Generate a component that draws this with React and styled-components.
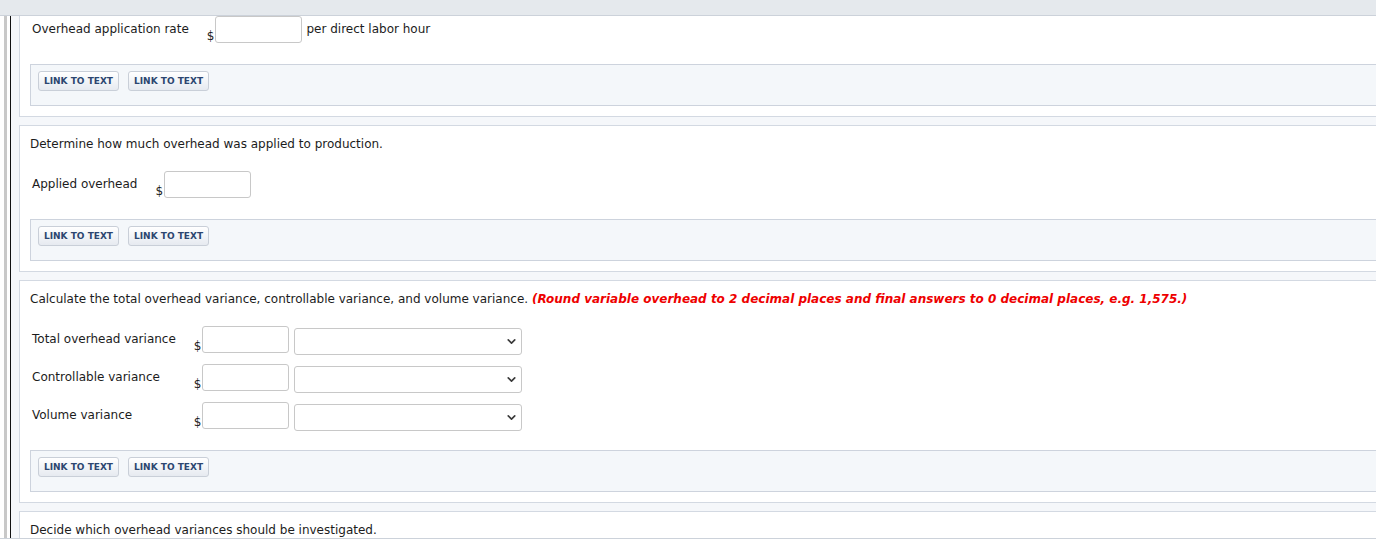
import React from "react";
import styled, { createGlobalStyle } from "styled-components";
import { ChevronDown } from "lucide-react";

const GlobalStyle = createGlobalStyle`
  html, body {
    margin: 0;
    padding: 0;
    background: #ffffff;
  }
  body {
    font-family: "DejaVu Sans", Verdana, sans-serif;
    font-size: 12px;
    color: #1c1c1c;
  }
`;

function LinkBar() {
  return (
    <LinkBox>
      <LinkButton type="button">LINK TO TEXT</LinkButton>
      <LinkButton type="button">LINK TO TEXT</LinkButton>
    </LinkBox>
  );
}

// one answer line; its cells drop into the parent grid so columns line up
function AnswerRow({ label, suffix, select }) {
  return (
    <Row>
      <Label>{label}</Label>
      <Dollar>$</Dollar>
      <AmountInput type="text" />
      {suffix && <Suffix>{suffix}</Suffix>}
      {select && (
        <SelectWrap>
          <Select defaultValue="">
            <option value=""></option>
            <option value="fav">Favorable</option>
            <option value="unfav">Unfavorable</option>
            <option value="neither">Neither favorable nor unfavorable</option>
          </Select>
          <Chevron>
            <ChevronDown size={13} strokeWidth={3} />
          </Chevron>
        </SelectWrap>
      )}
    </Row>
  );
}

export default function App() {
  return (
    <>
      <GlobalStyle />
      <TopBar />
      <Body>
        <Rail>
          <RailLine />
        </Rail>
        <Content>
          <Panel $first>
            <Rows>
              <AnswerRow
                label="Overhead application rate"
                suffix="per direct labor hour"
              />
            </Rows>
            <LinkBar />
          </Panel>

          <Panel>
            <Prompt>Determine how much overhead was applied to production.</Prompt>
            <Rows>
              <AnswerRow label="Applied overhead" />
            </Rows>
            <LinkBar />
          </Panel>

          <Panel>
            <Prompt>
              Calculate the total overhead variance, controllable variance, and
              volume variance.{" "}
              <Note>
                (Round variable overhead to 2 decimal places and final answers
                to 0 decimal places, e.g. 1,575.)
              </Note>
            </Prompt>
            <Rows>
              <AnswerRow label="Total overhead variance" select />
              <AnswerRow label="Controllable variance" select />
              <AnswerRow label="Volume variance" select />
            </Rows>
            <LinkBar />
          </Panel>

          <Panel>
            <Prompt>Decide which overhead variances should be investigated.</Prompt>
          </Panel>
        </Content>
      </Body>
    </>
  );
}

const TopBar = styled.div`
  height: 15px;
  background: #e5e9ed;
  border-bottom: 1px solid #ccd2da;
`;

const Body = styled.div`
  display: flex;
  height: 522px;
  overflow: hidden;
  border-bottom: 1px solid #ccd2da;
`;

const Rail = styled.div`
  flex: 0 0 auto;
  margin-left: 4px;
  padding-left: 3px;
  border-left: 3px solid #c8c8c8;
  display: flex;
`;

const RailLine = styled.div`
  width: 8px;
  border-left: 1px solid #111111;
  background: #f5f7fa;
`;

const Content = styled.div`
  flex: 1;
  min-width: 0;
  display: flex;
  flex-direction: column;
  gap: 8px;
  background: #f5f7fa;
`;

const Panel = styled.section`
  flex: 0 0 auto;
  display: flex;
  flex-direction: column;
  gap: 20px;
  padding: ${(p) => (p.$first ? "0 0 10px 10px" : "10px 0 10px 10px")};
  background: #ffffff;
  border: 1px solid #d3d9e2;
  border-right: none;
  border-top: ${(p) => (p.$first ? "none" : "1px solid #d3d9e2")};
`;

const Prompt = styled.p`
  margin: 0 0 -1px;
  padding-top: 1px;
  line-height: 15px;
  white-space: nowrap;
`;

const Note = styled.span`
  color: #ee0000;
  font-weight: bold;
  font-style: italic;
`;

const Rows = styled.div`
  display: grid;
  grid-template-columns: repeat(4, max-content);
  grid-auto-rows: 28px;
  row-gap: 10px;
  align-items: start;
`;

const Row = styled.div`
  display: contents;
`;

const Label = styled.span`
  grid-column: 1;
  padding: 6px 18px 0 2px;
  line-height: 15px;
  white-space: nowrap;
`;

const Dollar = styled.span`
  grid-column: 2;
  align-self: end;
  line-height: 15px;
  padding-right: 1px;
`;

const AmountInput = styled.input`
  grid-column: 3;
  box-sizing: border-box;
  width: 87px;
  height: 27px;
  margin: 0;
  padding: 2px 4px;
  border: 1px solid #c8c8c8;
  border-radius: 3px;
  font: inherit;
  background: #ffffff;
`;

const Suffix = styled.span`
  grid-column: 4;
  padding: 6px 0 0 4px;
  line-height: 15px;
  white-space: nowrap;
`;

const SelectWrap = styled.div`
  grid-column: 4;
  position: relative;
  margin: 2px 0 0 5px;
`;

const Select = styled.select`
  display: block;
  box-sizing: border-box;
  appearance: none;
  width: 228px;
  height: 27px;
  margin: 0;
  padding: 2px 24px 2px 6px;
  border: 1px solid #c8c8c8;
  border-radius: 3px;
  background: #ffffff;
  font: inherit;
  color: #1c1c1c;
`;

const Chevron = styled.span`
  position: absolute;
  right: 4px;
  top: 7px;
  display: flex;
  color: #3a3a3a;
  pointer-events: none;
`;

const LinkBox = styled.div`
  display: flex;
  gap: 9px;
  padding: 6px 7px 14px;
  background: #f4f7fa;
  border: 1px solid #cdd3dd;
  border-right: none;
`;

const LinkButton = styled.button`
  box-sizing: border-box;
  height: 20px;
  padding: 0 5px;
  border: 1px solid #c9cfd8;
  border-radius: 3px;
  background: linear-gradient(#ffffff, #e6eaf0);
  color: #2c4670;
  font-family: "DejaVu Sans", Verdana, sans-serif;
  font-size: 9px;
  font-weight: bold;
  white-space: nowrap;
  cursor: pointer;
`;
